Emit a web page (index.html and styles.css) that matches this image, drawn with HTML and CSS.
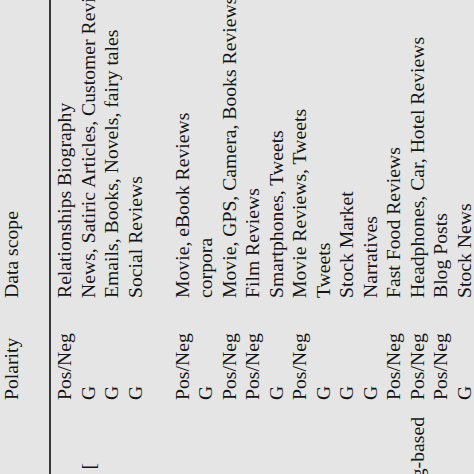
FILE: index.html
```html
<!DOCTYPE html>
<html>
<head>
<meta charset="utf-8">
<link rel="stylesheet" href="styles.css">
</head>
<body>
<div class="page">
  <div class="frame">
    <div class="table">
      <div class="row head">
        <div class="method"></div>
        <div class="pol">Polarity</div>
        <div class="scope">Data scope</div>
      </div>
      <div class="rule"></div>
      <div class="body">
        <div class="row"><div class="method"></div><div class="pol">Pos/Neg</div><div class="scope">Relationships Biography</div></div>
        <div class="row"><div class="method edge">[</div><div class="pol">G</div><div class="scope">News, Satiric Articles, Customer Reviews</div></div>
        <div class="row"><div class="method"></div><div class="pol">G</div><div class="scope">Emails, Books, Novels, fairy tales</div></div>
        <div class="row"><div class="method"></div><div class="pol">G</div><div class="scope">Social Reviews</div></div>
        <div class="row blank"></div>
        <div class="row"><div class="method"></div><div class="pol">Pos/Neg</div><div class="scope">Movie, eBook Reviews</div></div>
        <div class="row"><div class="method"></div><div class="pol">G</div><div class="scope">corpora</div></div>
        <div class="row"><div class="method"></div><div class="pol">Pos/Neg</div><div class="scope">Movie, GPS, Camera, Books Reviews</div></div>
        <div class="row"><div class="method"></div><div class="pol">Pos/Neg</div><div class="scope">Film Reviews</div></div>
        <div class="row"><div class="method"></div><div class="pol">G</div><div class="scope">Smartphones, Tweets</div></div>
        <div class="row"><div class="method"></div><div class="pol">Pos/Neg</div><div class="scope">Movie Reviews, Tweets</div></div>
        <div class="row"><div class="method"></div><div class="pol">G</div><div class="scope">Tweets</div></div>
        <div class="row"><div class="method"></div><div class="pol">G</div><div class="scope">Stock Market</div></div>
        <div class="row"><div class="method"></div><div class="pol">G</div><div class="scope">Narratives</div></div>
        <div class="row"><div class="method"></div><div class="pol">Pos/Neg</div><div class="scope">Fast Food Reviews</div></div>
        <div class="row"><div class="method">Learning-based</div><div class="pol">Pos/Neg</div><div class="scope">Headphones, Car, Hotel Reviews</div></div>
        <div class="row"><div class="method"></div><div class="pol">Pos/Neg</div><div class="scope">Blog Posts</div></div>
        <div class="row"><div class="method"></div><div class="pol">G</div><div class="scope">Stock News</div></div>
      </div>
    </div>
  </div>
</div>
</body>
</html>
```
FILE: styles.css
```css
html, body {
  margin: 0;
  padding: 0;
  background: #e5e5e5;
}
.page {
  width: 474px;
  height: 474px;
  overflow: hidden;
  background: #e5e5e5;
}
.frame {
  width: 474px;
  height: 474px;
  transform: rotate(-90deg);
  font-family: "Liberation Serif", "Times New Roman", serif;
  font-size: 19.7px;
  line-height: 23.5px;
  color: #141414;
}
.table {
  margin-top: -3px;
  margin-left: -200px;
}
.row {
  display: grid;
  grid-template-columns: 254px 85px max-content;
  column-gap: 17px;
  white-space: nowrap;
  height: 23.5px;
}
.method {
  text-align: right;
}
.method.edge {
  padding-right: 46px;
}
.head {
  margin-bottom: 25.5px;
}
.rule {
  width: 900px;
  height: 2px;
  background: #383838;
}
.body {
  padding-top: 2px;
}
```
